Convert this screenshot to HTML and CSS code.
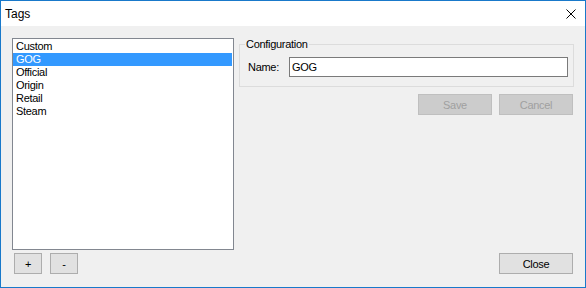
FILE: index.html
```html
<!DOCTYPE html>
<html>
<head>
<meta charset="utf-8">
<link rel="stylesheet" href="styles.css">
</head>
<body>
<div class="window">
  <div class="titlebar">
    <span class="title">Tags</span>
    <span class="close-x">
      <svg width="10" height="10" viewBox="0 0 10 10"><path d="M0.5 0.5 L9.5 9.5 M9.5 0.5 L0.5 9.5" stroke="#000" stroke-width="1" fill="none"/></svg>
    </span>
  </div>
  <div class="client">
    <div class="left">
      <div class="listbox">
        <div class="item">Custom</div>
        <div class="item selected">GOG</div>
        <div class="item">Official</div>
        <div class="item">Origin</div>
        <div class="item">Retail</div>
        <div class="item">Steam</div>
      </div>
      <div class="left-buttons">
        <button class="btn small">+</button>
        <button class="btn small">-</button>
      </div>
    </div>
    <div class="right">
      <fieldset class="group">
        <legend>Configuration</legend>
        <div class="row">
          <label class="lbl">Name:</label>
          <input class="text" type="text" value="GOG">
        </div>
      </fieldset>
      <div class="actions">
        <button class="btn disabled">Save</button>
        <button class="btn disabled">Cancel</button>
      </div>
      <div class="spacer"></div>
      <div class="actions">
        <button class="btn">Close</button>
      </div>
    </div>
  </div>
</div>
</body>
</html>
```
FILE: styles.css
```css
* { box-sizing: border-box; }
html, body { margin: 0; padding: 0; }
body {
  width: 586px;
  height: 288px;
  font-family: "Liberation Sans", Arial, sans-serif;
  font-size: 11px;
  letter-spacing: -0.3px;
  color: #000;
}
.window {
  width: 586px;
  height: 288px;
  border: 1px solid #1979ca;
  display: flex;
  flex-direction: column;
  background: #f0f0f0;
}
.titlebar {
  height: 25px;
  background: #fff;
  display: flex;
  align-items: center;
  justify-content: space-between;
  padding: 0 9px 0 4px;
  flex: none;
}
.title {
  font-size: 12px;
  letter-spacing: 0;
}
.close-x { display: flex; }
.client {
  flex: 1;
  display: flex;
  gap: 5px;
  padding: 12px 11px 13px 11px;
}
.left {
  width: 222px;
  display: flex;
  flex-direction: column;
  gap: 3px;
}
.listbox {
  flex: 1;
  background: #fff;
  border: 1px solid #828790;
  padding: 1px 0;
}
.item {
  height: 13px;
  line-height: 13px;
  padding-left: 3px;
  white-space: nowrap;
}
.item.selected {
  background: #3399ff;
  color: #fff;
  margin-right: 1px;
}
.left-buttons {
  display: flex;
  gap: 8px;
  padding-left: 2px;
}
.btn {
  font-family: inherit;
  font-size: 11px;
  letter-spacing: -0.3px;
  height: 21px;
  width: 74px;
  background: #e1e1e1;
  border: 1px solid #adadad;
  color: #000;
  padding: 0;
  margin: 0;
}
.btn.small { width: 28px; }
.btn.disabled {
  background: #cccccc;
  border-color: #bfbfbf;
  color: #a0a0a0;
}
.right {
  flex: 1;
  display: flex;
  flex-direction: column;
}
.group {
  margin: 0;
  border: 1px solid #dcdcdc;
  padding: 6px 5px 9px 8px;
}
.group legend {
  padding: 0 1px;
  margin-left: -3px;
  line-height: 13px;
}
.row {
  display: flex;
  align-items: center;
}
.lbl { width: 41px; }
.text {
  flex: 1;
  height: 20px;
  border: 1px solid #7a7a7a;
  background: #fff;
  font-family: inherit;
  font-size: 11px;
  letter-spacing: -0.3px;
  padding: 0 2px;
  margin: 0;
  outline: none;
}
.actions {
  display: flex;
  justify-content: flex-end;
  gap: 7px;
  padding-right: 1px;
  margin-top: 7px;
}
.spacer { flex: 1; }
```
